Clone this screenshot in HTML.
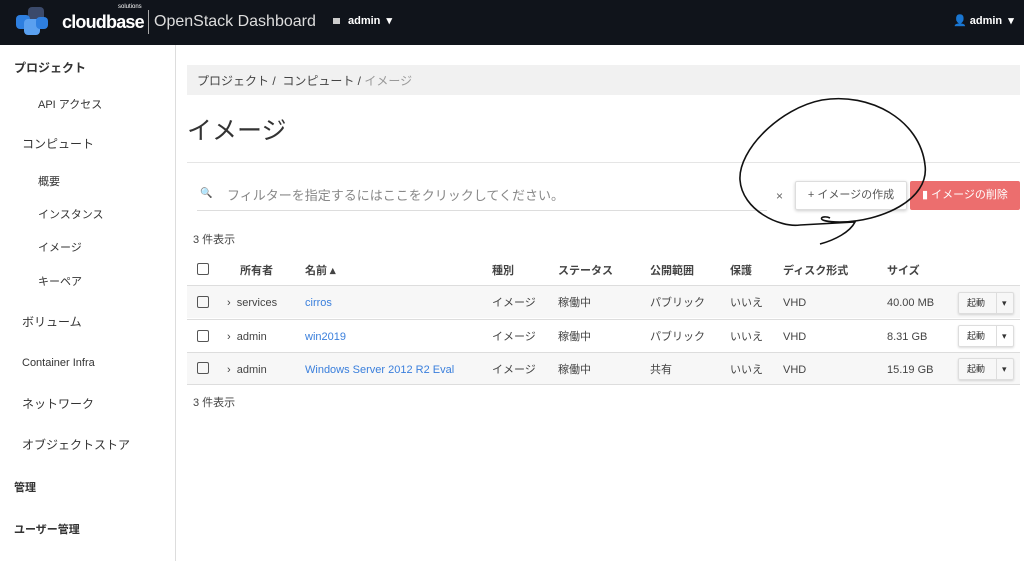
<!DOCTYPE html>
<html><head><meta charset="utf-8"><style>
*{box-sizing:border-box;margin:0;padding:0}
body{width:1024px;height:561px;overflow:hidden;background:#fff;font-family:"Liberation Sans","Noto Sans CJK JP",sans-serif;color:#333;position:relative;line-height:1.45}
.hdr{position:absolute;left:0;top:0;width:1024px;height:45px;background:#10141b;color:#fff}
.side{position:absolute;left:0;top:45px;width:176px;height:516px;border-right:1px solid #ddd}
.side div{position:absolute;font-size:12px;color:#333;margin-top:3px}
.a{position:absolute;white-space:nowrap}
.row{position:absolute;left:187px;width:833px;border-top:1px solid #ddd;height:33px}
.cb{position:absolute;width:12px;height:12px;border:1.5px solid #555;border-radius:2px}
.t{font-size:11px;color:#444;margin-top:2px}
.lnk{color:#3a7fdc}
.btn{position:absolute;left:958px;width:56px;height:22px;border:1px solid #ddd;border-radius:2px;box-shadow:0 1px 2px rgba(0,0,0,.15);font-size:9px}
</style></head><body>
<div class="hdr">
<svg class="a" style="left:14px;top:5px" width="40" height="32"><rect x="14" y="2" width="16" height="16" rx="4" fill="#3b4a6b"/><rect x="2" y="10" width="14" height="14" rx="4" fill="#2e7fe0"/><rect x="10" y="14" width="16" height="16" rx="4" fill="#5aa0f0"/><rect x="22" y="12" width="12" height="12" rx="4" fill="#2e7fe0"/></svg>
<div class="a" style="left:62px;top:9px;font-size:18px;font-weight:bold;letter-spacing:-0.8px">cloudbase</div>
<div class="a" style="left:118px;top:3px;font-size:6px">solutions</div>
<div class="a" style="left:148px;top:10px;width:1px;height:24px;background:#aaa"></div>
<div class="a" style="left:154px;top:10px;font-size:16px;color:#ddd">OpenStack Dashboard</div>
<div class="a" style="left:333px;top:18px;width:7px;height:6px;background:#ccc"></div>
<div class="a" style="left:348px;top:14px;font-size:11px;font-weight:bold">admin &nbsp;▾</div>
<div class="a" style="left:953px;top:14px;font-size:11px;font-weight:bold">👤 admin &nbsp;▾</div>
</div>
<div class="side">
<div style="left:14px;top:12px;font-weight:bold">プロジェクト</div>
<div style="left:38px;top:50px;font-size:11px">API アクセス</div>
<div style="left:22px;top:88px">コンピュート</div>
<div style="left:38px;top:127px;font-size:11px">概要</div>
<div style="left:38px;top:160px;font-size:11px">インスタンス</div>
<div style="left:38px;top:193px;font-size:11px">イメージ</div>
<div style="left:38px;top:227px;font-size:11px">キーペア</div>
<div style="left:22px;top:266px">ボリューム</div>
<div style="left:22px;top:308px;font-size:11px">Container Infra</div>
<div style="left:22px;top:348px">ネットワーク</div>
<div style="left:22px;top:389px">オブジェクトストア</div>
<div style="left:14px;top:433px;font-weight:bold;font-size:11px">管理</div>
<div style="left:14px;top:475px;font-weight:bold;font-size:11px">ユーザー管理</div>
</div>
<div class="a" style="left:187px;top:65px;width:833px;height:30px;background:#f1f1f1"></div>
<div class="a t" style="left:197px;top:71px;font-size:12px">プロジェクト / &nbsp;コンピュート / <span style="color:#999">イメージ</span></div>
<div class="a" style="left:187px;top:113px;font-size:25px;color:#333">イメージ</div>
<div class="a" style="left:187px;top:162px;width:833px;height:1px;background:#e5e5e5"></div>
<div class="a" style="left:200px;top:189px;font-size:10px;color:#666;line-height:1">🔍</div>
<div class="a" style="left:227px;top:187px;font-size:13px;color:#888">フィルターを指定するにはここをクリックしてください。</div>
<div class="a" style="left:197px;top:210px;width:570px;height:1px;background:#ddd"></div>
<div class="a" style="left:776px;top:188px;font-size:12px;color:#666">×</div>
<div class="a" style="left:795px;top:181px;width:112px;height:29px;border:1px solid #ddd;border-radius:2px;box-shadow:0 1px 3px rgba(0,0,0,.2);font-size:11px;color:#555;text-align:center;line-height:27px">+ イメージの作成</div>
<div class="a" style="left:910px;top:181px;width:110px;height:29px;background:#ec6e6e;border-radius:2px;font-size:11px;color:#fff;text-align:center;line-height:29px">▮ イメージの削除</div>
<div class="a t" style="left:193px;top:231px">3 件表示</div>
<div class="a t" style="left:193px;top:394px">3 件表示</div>
<div class="cb" style="left:197px;top:263px"></div>
<div class="a t" style="top:262px;left:240px;font-weight:bold">所有者</div>
<div class="a t" style="top:262px;left:305px;font-weight:bold">名前 ▴</div>
<div class="a t" style="top:262px;left:492px;font-weight:bold">種別</div>
<div class="a t" style="top:262px;left:558px;font-weight:bold">ステータス</div>
<div class="a t" style="top:262px;left:650px;font-weight:bold">公開範囲</div>
<div class="a t" style="top:262px;left:730px;font-weight:bold">保護</div>
<div class="a t" style="top:262px;left:783px;font-weight:bold">ディスク形式</div>
<div class="a t" style="top:262px;left:887px;font-weight:bold">サイズ</div>
<div class="row" style="top:285px;background:#f7f7f7"></div>
<div class="row" style="top:319px"></div>
<div class="row" style="top:352px;background:#f7f7f7;border-bottom:1px solid #ddd"></div>
<div class="cb" style="left:197px;top:296px"></div><div class="a t" style="left:227px;top:294px">›&nbsp; services</div><div class="a t lnk" style="left:305px;top:294px">cirros</div><div class="a t" style="left:492px;top:294px">イメージ</div><div class="a t" style="left:558px;top:294px">稼働中</div><div class="a t" style="left:650px;top:294px">パブリック</div><div class="a t" style="left:730px;top:294px">いいえ</div><div class="a t" style="left:783px;top:294px">VHD</div><div class="a t" style="left:887px;top:294px">40.00 MB</div><div class="btn" style="top:292px"><span class="a" style="left:8px;top:4px">起動</span><span class="a" style="left:37px;top:0;width:1px;height:20px;background:#ddd"></span><span class="a" style="left:43px;top:4px">▾</span></div>
<div class="cb" style="left:197px;top:330px"></div><div class="a t" style="left:227px;top:328px">›&nbsp; admin</div><div class="a t lnk" style="left:305px;top:328px">win2019</div><div class="a t" style="left:492px;top:328px">イメージ</div><div class="a t" style="left:558px;top:328px">稼働中</div><div class="a t" style="left:650px;top:328px">パブリック</div><div class="a t" style="left:730px;top:328px">いいえ</div><div class="a t" style="left:783px;top:328px">VHD</div><div class="a t" style="left:887px;top:328px">8.31 GB</div><div class="btn" style="top:325px"><span class="a" style="left:8px;top:4px">起動</span><span class="a" style="left:37px;top:0;width:1px;height:20px;background:#ddd"></span><span class="a" style="left:43px;top:4px">▾</span></div>
<div class="cb" style="left:197px;top:362px"></div><div class="a t" style="left:227px;top:361px">›&nbsp; admin</div><div class="a t lnk" style="left:305px;top:361px">Windows Server 2012 R2 Eval</div><div class="a t" style="left:492px;top:361px">イメージ</div><div class="a t" style="left:558px;top:361px">稼働中</div><div class="a t" style="left:650px;top:361px">共有</div><div class="a t" style="left:730px;top:361px">いいえ</div><div class="a t" style="left:783px;top:361px">VHD</div><div class="a t" style="left:887px;top:361px">15.19 GB</div><div class="btn" style="top:358px"><span class="a" style="left:8px;top:4px">起動</span><span class="a" style="left:37px;top:0;width:1px;height:20px;background:#ddd"></span><span class="a" style="left:43px;top:4px">▾</span></div>
<svg class="a" style="left:0;top:0" width="1024" height="561"><path d="M822 100 C870 92 920 120 925 165 C930 200 880 222 840 222 C812 222 822 214 830 218 M822 100 C780 108 738 150 740 180 C742 210 780 228 800 225 M800 225 L 855 222 C850 232 835 240 820 244" fill="none" stroke="#111" stroke-width="1.6"/></svg>
</body></html>
